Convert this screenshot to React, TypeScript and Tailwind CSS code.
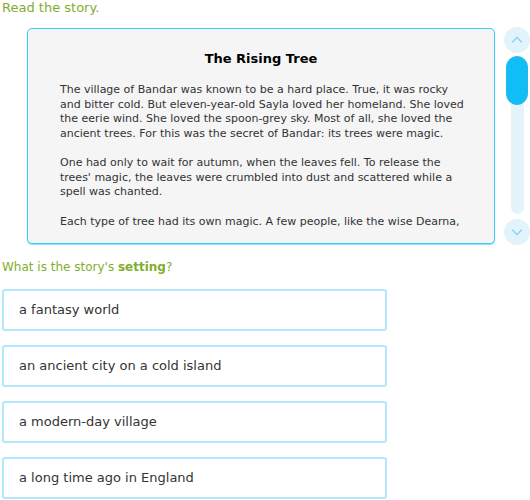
import React from "react";

const answers = [
  "a fantasy world",
  "an ancient city on a cold island",
  "a modern-day village",
  "a long time ago in England",
];

const paragraphs = [
  [
    "The village of Bandar was known to be a hard place. True, it was rocky",
    "and bitter cold. But eleven-year-old Sayla loved her homeland. She loved",
    "the eerie wind. She loved the spoon-grey sky. Most of all, she loved the",
    "ancient trees. For this was the secret of Bandar: its trees were magic.",
  ],
  [
    "One had only to wait for autumn, when the leaves fell. To release the",
    "trees' magic, the leaves were crumbled into dust and scattered while a",
    "spell was chanted.",
  ],
  ["Each type of tree had its own magic. A few people, like the wise Dearna,"],
];

export default function App() {
  return (
    <div className="w-[530px] h-[500px] bg-white overflow-hidden" style={{ fontFamily: '"DejaVu Sans", Verdana, sans-serif' }}>
      <div className="pl-[2px] text-[13px] leading-[15px] text-[#7fae2e]">Read the story.</div>
      <div className="flex mt-[13px] ml-[27px] gap-[9px]">
        <div className="w-[470px] h-[216px] overflow-hidden rounded-[5px] border border-[#3ccbf6] bg-[#f5f5f5] shadow-[0_1px_1px_#8bdcf8] pt-[20px] pl-[32px]">
          <h1 className="text-center pr-[32px] text-[13px] font-bold leading-[20px] text-black">The Rising Tree</h1>
          <div className="mt-[14px] text-[11px] leading-[14.5px] text-[#333] whitespace-nowrap">
            {paragraphs.map((p, i) => (
              <p key={i} className={i > 0 ? "mt-[15px]" : ""}>
                {p.map((line, j) => (
                  <span key={j} className="block">{line}</span>
                ))}
              </p>
            ))}
          </div>
        </div>
        <div className="flex flex-col items-center w-[26px] -mt-[1px]">
          <div className="w-[26px] h-[26px] rounded-full bg-[#e3f3fb] flex items-center justify-center">
            <svg width="12" height="8" viewBox="0 0 12 8" fill="none">
              <path d="M1 6.5 L6 1.5 L11 6.5" stroke="#86d2f1" strokeWidth="1.3" />
            </svg>
          </div>
          <div className="relative w-[13px] h-[158px] mt-[3px] rounded-full bg-[#e5f4fb]">
            <div className="absolute left-[-4.5px] top-0 w-[22px] h-[49px] rounded-full bg-[#10bdf4] border border-[#2eb4e6]" />
          </div>
          <div className="w-[26px] h-[26px] mt-[5px] rounded-full bg-[#e3f3fb] flex items-center justify-center">
            <svg width="12" height="8" viewBox="0 0 12 8" fill="none">
              <path d="M1 1.5 L6 6.5 L11 1.5" stroke="#86d2f1" strokeWidth="1.3" />
            </svg>
          </div>
        </div>
      </div>
      <div className="pl-[2px] mt-[14px] text-[12px] leading-[16px] text-[#7fae2e]">
        What is the story's <b className="font-bold">setting</b>?
      </div>
      <div className="flex flex-col gap-[14px] mt-[14px] pl-[2px]">
        {answers.map((a) => (
          <div key={a} className="w-[385px] h-[42px] rounded-[3px] border-2 border-[#b3e8fc] flex items-center pl-[15px] text-[13px] text-[#333]">
            {a}
          </div>
        ))}
      </div>
    </div>
  );
}
